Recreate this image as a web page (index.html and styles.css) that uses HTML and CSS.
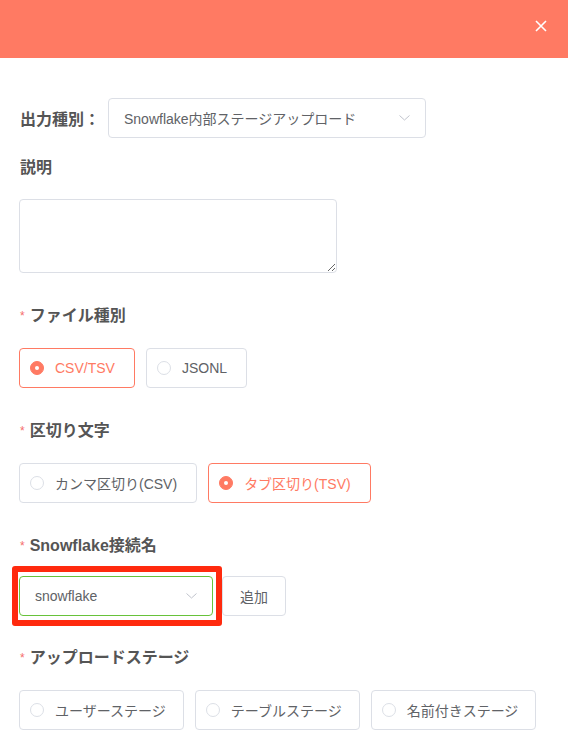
FILE: index.html
```html
<!DOCTYPE html>
<html lang="ja">
<head>
<meta charset="utf-8">
<link rel="stylesheet" href="styles.css">
</head>
<body>
<div class="dialog">
  <header class="dialog-header">
    <button class="close" aria-label="close">
      <svg width="12" height="12" viewBox="0 0 12 12"><path d="M1 1L11 11M11 1L1 11" stroke="#fff" stroke-width="1.6" fill="none"/></svg>
    </button>
  </header>
  <div class="dialog-body">
    <div class="item item-inline">
      <label class="label-inline">出力種別：</label>
      <div class="select select-wide">
        <span>Snowflake内部ステージアップロード</span>
        <svg class="chev" width="11" height="6" viewBox="0 0 11 6"><path d="M0.5 0.5L5.5 5L10.5 0.5" stroke="#c0c4cc" stroke-width="1" fill="none"/></svg>
      </div>
    </div>

    <div class="item item-desc">
      <div class="label">説明</div>
      <textarea class="textarea"></textarea>
    </div>

    <div class="item">
      <div class="label"><span class="req">*</span>ファイル種別</div>
      <div class="radios">
        <label class="radio checked"><span class="dot"></span>CSV/TSV</label>
        <label class="radio"><span class="dot"></span>JSONL</label>
      </div>
    </div>

    <div class="item">
      <div class="label"><span class="req">*</span>区切り文字</div>
      <div class="radios">
        <label class="radio"><span class="dot"></span>カンマ区切り(CSV)</label>
        <label class="radio checked"><span class="dot"></span>タブ区切り(TSV)</label>
      </div>
    </div>

    <div class="item item-conn">
      <div class="label"><span class="req">*</span>Snowflake接続名</div>
      <div class="conn-row">
        <div class="select select-conn">
          <span>snowflake</span>
          <svg class="chev" width="11" height="6" viewBox="0 0 11 6"><path d="M0.5 0.5L5.5 5L10.5 0.5" stroke="#c0c4cc" stroke-width="1" fill="none"/></svg>
          <div class="highlight"></div>
        </div>
        <button class="btn">追加</button>
      </div>
    </div>

    <div class="item">
      <div class="label"><span class="req">*</span>アップロードステージ</div>
      <div class="radios radios-stage">
        <label class="radio"><span class="dot"></span>ユーザーステージ</label>
        <label class="radio"><span class="dot"></span>テーブルステージ</label>
        <label class="radio"><span class="dot"></span>名前付きステージ</label>
      </div>
    </div>
  </div>
</div>
</body>
</html>
```

FILE: styles.css
```css
* { box-sizing: border-box; }
html, body { margin: 0; padding: 0; background: #fff; }
body {
  font-family: "Liberation Sans", "Noto Sans CJK JP", sans-serif;
  color: #606266;
  width: 568px;
  height: 744px;
  overflow: hidden;
}
.dialog-header {
  height: 58px;
  background: #ff7a63;
  display: flex;
  justify-content: flex-end;
  align-items: center;
  padding-right: 21px;
}
.close {
  background: none;
  border: 0;
  padding: 0;
  width: 12px;
  height: 12px;
  display: flex;
  margin-top: -6px;
}
.dialog-body {
  padding: 40px 0 0 19px;
}
.item { margin-bottom: 31px; }
.item-inline {
  display: flex;
  align-items: center;
  margin-bottom: 18px;
}
.label-inline {
  font-size: 16px;
  font-weight: bold;
  color: #555;
  width: 89px;
  padding-left: 1px;
}
.label {
  font-size: 16px;
  font-weight: bold;
  color: #555;
  line-height: 24px;
  height: 24px;
  margin-bottom: 20px;
  padding-left: 1px;
  overflow: hidden;
}
.req {
  color: #f56c6c;
  font-size: 12px;
  font-weight: normal;
  margin-right: 5px;
  vertical-align: 1px;
  line-height: 1;
}
.select {
  position: relative;
  height: 40px;
  border: 1px solid #dcdfe6;
  border-radius: 4px;
  display: flex;
  align-items: center;
  padding: 0 15px;
  font-size: 14px;
  color: #606266;
}
.select span { flex: 1; }
.select-wide { width: 318px; }
.textarea {
  display: block;
  width: 318px;
  height: 74px;
  border: 1px solid #dcdfe6;
  border-radius: 4px;
  margin: 0;
  resize: vertical;
  font-family: inherit;
}
.item-desc .label { margin-bottom: 19px; }
.radios {
  display: flex;
  gap: 11px;
  height: 40px;
}
.radio {
  height: 40px;
  border: 1px solid #dcdfe6;
  border-radius: 4px;
  display: flex;
  align-items: center;
  padding: 0 19px 0 10px;
  font-size: 14px;
  color: #606266;
}
.radios-stage .radio { padding-right: 17px; }
.dot {
  width: 14px;
  height: 14px;
  border: 1px solid #dcdfe6;
  border-radius: 50%;
  margin-right: 11px;
  background: #fff;
  position: relative;
}
.radio.checked {
  border-color: #ff7a63;
  color: #ff7a63;
}
.radio.checked .dot {
  background: #ff7a63;
  border-color: #ff7a63;
}
.radio.checked .dot::after {
  content: "";
  position: absolute;
  width: 4px;
  height: 4px;
  border-radius: 50%;
  background: #fff;
  left: 4px;
  top: 4px;
}
.item-conn { margin-bottom: 30px; }
.item-conn .label { margin-bottom: 18px; }
.conn-row {
  display: flex;
  gap: 9px;
  height: 40px;
}
.select-conn {
  width: 194px;
  border-color: #67c23a;
}
.highlight {
  position: absolute;
  left: -8px;
  top: -11px;
  right: -10px;
  bottom: -11px;
  border: 6px solid #ff2a0e;
  border-radius: 3px;
  pointer-events: none;
}
.btn {
  height: 40px;
  width: 64px;
  border: 1px solid #dcdfe6;
  border-radius: 4px;
  background: #fff;
  font-family: inherit;
  font-size: 14px;
  color: #606266;
  padding: 0;
}
```
